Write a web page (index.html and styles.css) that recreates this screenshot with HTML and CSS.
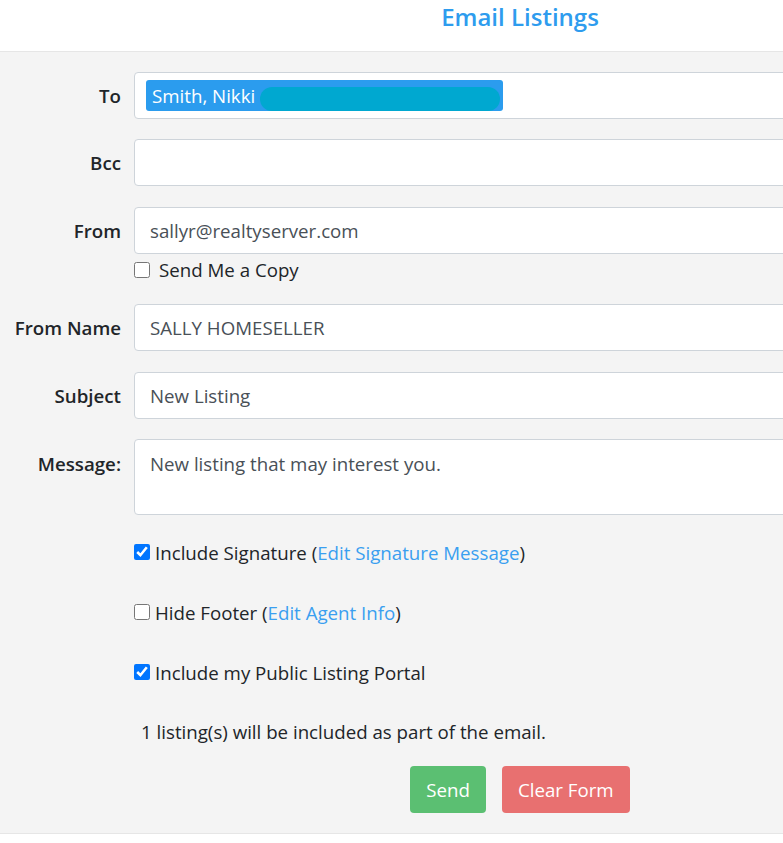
FILE: index.html
```html
<!DOCTYPE html>
<html lang="en">
<head>
    <meta charset="UTF-8">
    <title>Email Listings</title>
    <link rel="stylesheet" href="styles.css">
</head>
<body>
    <div class="page">
        <header class="title-bar">
            <h2>Email Listings</h2>
        </header>

        <section class="email-form">
            <div class="form-row">
                <label class="field-label">To</label>
                <div class="field">
                    <div class="input to-box">
                        <span class="chip">Smith, Nikki<span class="chip-mask"></span></span>
                    </div>
                </div>
            </div>

            <div class="form-row">
                <label class="field-label">Bcc</label>
                <div class="field">
                    <input class="input" type="text">
                </div>
            </div>

            <div class="form-row">
                <label class="field-label">From</label>
                <div class="field">
                    <input class="input" type="text" value="sallyr@realtyserver.com">
                    <label class="copy-check"><input type="checkbox"> <span>Send Me a Copy</span></label>
                </div>
            </div>

            <div class="form-row">
                <label class="field-label">From Name</label>
                <div class="field">
                    <input class="input" type="text" value="SALLY HOMESELLER">
                </div>
            </div>

            <div class="form-row">
                <label class="field-label">Subject</label>
                <div class="field">
                    <input class="input" type="text" value="New Listing">
                </div>
            </div>

            <div class="form-row top">
                <label class="field-label">Message:</label>
                <div class="field">
                    <textarea class="input message">New listing that may interest you.</textarea>
                </div>
            </div>

            <div class="options">
                <label class="option"><input type="checkbox" checked> <span>Include Signature (<a href="#">Edit Signature Message</a>)</span></label>
                <label class="option"><input type="checkbox"> <span>Hide Footer (<a href="#">Edit Agent Info</a>)</span></label>
                <label class="option"><input type="checkbox" checked> <span>Include my Public Listing Portal</span></label>
                <p class="note">1 listing(s) will be included as part of the email.</p>
            </div>

            <div class="actions">
                <button class="btn btn-send" type="submit">Send</button>
                <button class="btn btn-clear" type="reset">Clear Form</button>
            </div>
        </section>
    </div>
</body>
</html>
```

FILE: styles.css
```css
html, body {
    margin: 0;
    overflow: hidden;
}

body {
    font-family: "Open Sans", "Noto Sans", Arial, sans-serif;
    font-size: 18.7px;
    color: #212529;
    background: white;
}

.page {
    width: 1040px;
}

.title-bar {
    height: 51px;
    border-bottom: 1px solid #e6e6e6;
    text-align: center;
}

.title-bar h2 {
    margin: 0;
    padding-top: 1px;
    font-size: 24px;
    font-weight: 600;
    line-height: 32px;
    color: #2e9cee;
}

.email-form {
    background: #f4f4f4;
    padding: 19.5px 0 20px;
    border-bottom: 1px solid #e6e6e6;
}

.form-row {
    display: flex;
    align-items: flex-start;
    margin-bottom: 20.5px;
}

.field-label {
    width: 121px;
    padding-right: 13px;
    text-align: right;
    font-weight: 600;
    line-height: 47px;
    flex-shrink: 0;
    white-space: nowrap;
}

.form-row.top .field-label {
    line-height: 50px;
}

.field {
    flex: 1;
}

.input {
    display: block;
    box-sizing: border-box;
    width: 100%;
    height: 47px;
    margin: 0;
    padding: 0 15px;
    border: 1px solid #ced4da;
    border-radius: 4px;
    background: white;
    font-family: inherit;
    font-size: 18.7px;
    color: #495057;
}

.to-box {
    padding: 7px 11px;
}

.chip {
    display: flex;
    align-items: flex-end;
    width: 357px;
    height: 31px;
    box-sizing: border-box;
    padding: 0 3px 0 6px;
    border-radius: 3px;
    background: #2b9cee;
    color: white;
    line-height: 31px;
}

.chip-mask {
    width: 240px;
    height: 24px;
    margin-left: auto;
    border-radius: 12px;
    background: #00a8d0;
}

.message {
    height: 76px;
    padding-top: 12px;
    resize: none;
    line-height: 24px;
}

.copy-check {
    display: flex;
    align-items: center;
    gap: 9px;
    height: 30px;
    margin-top: 1px;
    margin-bottom: -1px;
}

input[type="checkbox"] {
    width: 16px;
    height: 16px;
    margin: 0;
}

.options {
    margin-top: -13.5px;
    padding-left: 134px;
}

.option {
    display: flex;
    align-items: center;
    gap: 5px;
    height: 60px;
}

.option a {
    color: #3a9ff0;
    text-decoration: none;
}

.note {
    margin: 0;
    padding-left: 7px;
    line-height: 60px;
}

.actions {
    display: flex;
    justify-content: center;
    gap: 16px;
    margin-top: 4px;
}

.btn {
    height: 47px;
    padding: 0 16px;
    border: none;
    border-radius: 4px;
    color: white;
    font-family: inherit;
    font-size: 18.7px;
}

.btn-send {
    background: #5bbf72;
}

.btn-clear {
    background: #e87070;
}
```
